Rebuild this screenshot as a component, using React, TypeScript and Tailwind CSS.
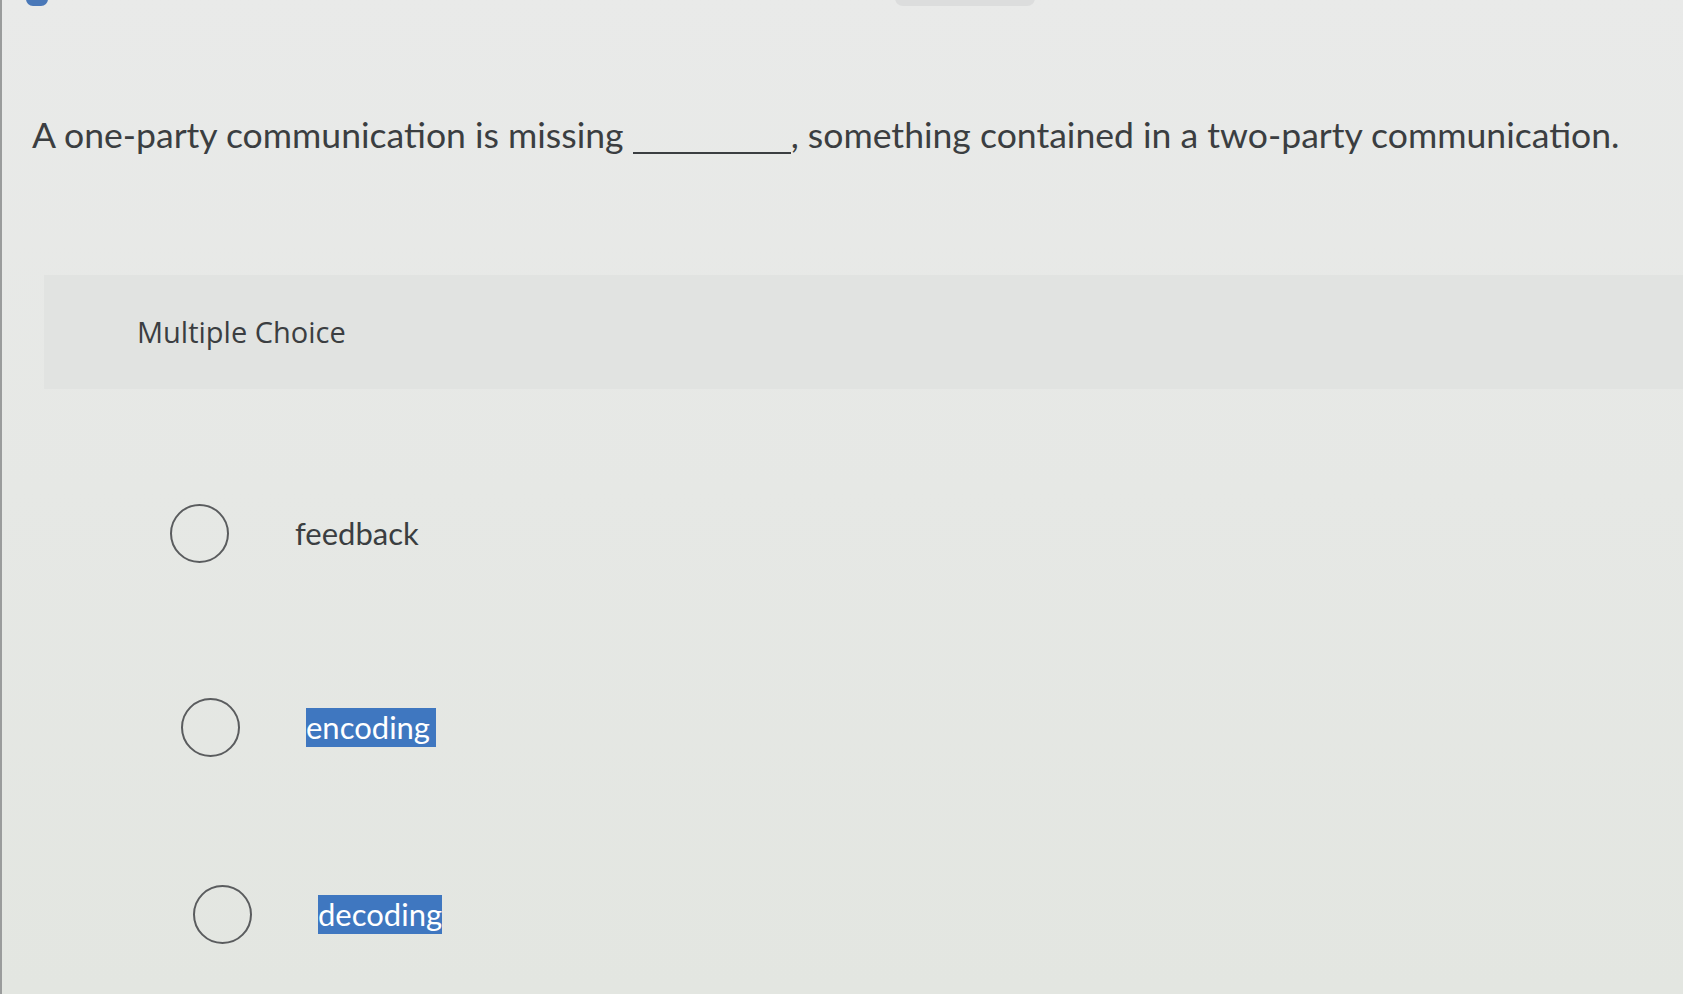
import React from 'react'

const OPTIONS = [
  { label: 'feedback', selected: false, shift: 'ml-0', gap: 'mt-[115px]', pad: '' },
  { label: 'encoding', selected: true, shift: 'ml-[11px]', gap: 'mt-[135px]', pad: 'pr-[6px]' },
  { label: 'decoding', selected: true, shift: 'ml-[23px]', gap: 'mt-[128px]', pad: 'pr-0' },
]

function Radio() {
  return (
    <span className="block h-[59px] w-[59px] shrink-0 rounded-full border-2 border-[#5a5c5e]" />
  )
}

export default function App() {
  return (
    <div className="relative min-h-[994px] overflow-hidden bg-gradient-to-b from-[#e9eae9] to-[#e3e6e1] font-['Lato',sans-serif] text-[#3b3e41]">
      {/* bezel edge + stray ui bits at the top */}
      <div className="absolute left-0 top-0 h-full w-[2px] bg-[#9a9c9c]" />
      <div className="absolute -top-[8px] left-[26px] h-[14px] w-[22px] rounded-full bg-[#4a78b8]" />
      <div className="absolute -top-[10px] left-[895px] h-[16px] w-[140px] rounded-full bg-[#dcdddd]" />

      <p className="pl-[32px] pt-[112px] text-[35.6px] leading-[46px]">
        A one-party communication is missing{' '}
        <span className="inline-block w-[158px] translate-y-[6px] border-b-2 border-[#3b3e41]" />
        , something contained in a two-party communication.
      </p>

      <div className="ml-[44px] mt-[117px] flex h-[114px] items-center bg-[#e1e3e1] pl-[93px] font-['Open_Sans',sans-serif] text-[29px]">
        Multiple Choice
      </div>

      <div className="pl-[170px]">
        {OPTIONS.map((o, i) => (
          <div key={o.label} className={`flex items-center ${i === 0 ? 'mt-[115px]' : o.gap} ${o.shift}`}>
            <Radio />
            <span
              className={`ml-[66px] text-[31px] leading-[39px] ${
                o.selected ? `bg-[#3f77c0] ${o.pad} text-white` : 'text-[#3b3e41]'
              }`}
            >
              {o.label}
            </span>
          </div>
        ))}
      </div>
    </div>
  )
}
